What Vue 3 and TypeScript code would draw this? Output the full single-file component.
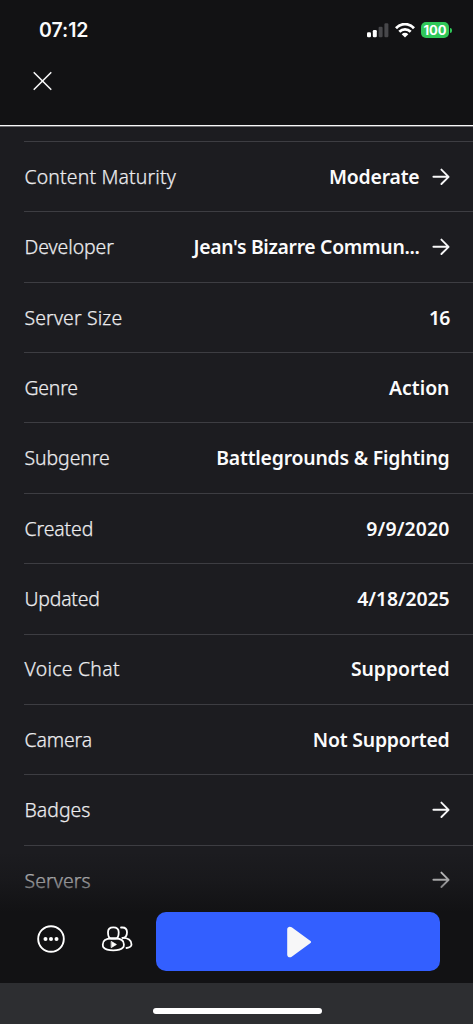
<script setup lang="ts">
interface Row {
  label: string
  labelSpacing: number
  value?: string
  valueSpacing?: number
  link?: boolean
}

const rows: Row[] = [
  { label: 'Content Maturity', labelSpacing: 0.17, value: 'Moderate', valueSpacing: -0.2, link: true },
  { label: 'Developer', labelSpacing: -0.05, value: "Jean's Bizarre Commun...", valueSpacing: -0.33, link: true },
  { label: 'Server Size', labelSpacing: 0.15, value: '16', valueSpacing: -0.9 },
  { label: 'Genre', labelSpacing: -0.2, value: 'Action', valueSpacing: 0 },
  { label: 'Subgenre', labelSpacing: -0.05, value: 'Battlegrounds & Fighting', valueSpacing: -0.2 },
  { label: 'Created', labelSpacing: -0.1, value: '9/9/2020', valueSpacing: 0.15 },
  { label: 'Updated', labelSpacing: -0.2, value: '4/18/2025', valueSpacing: -0.1 },
  { label: 'Voice Chat', labelSpacing: 0.28, value: 'Supported', valueSpacing: -0.05 },
  { label: 'Camera', labelSpacing: -0.1, value: 'Not Supported', valueSpacing: -0.2 },
  { label: 'Badges', labelSpacing: 0.05, link: true },
  { label: 'Servers', labelSpacing: 0.1, link: true },
]
</script>

<template>
  <div class="screen">
    <header class="top">
      <div class="status">
        <span class="time">07:12</span>
        <div class="indicators">
          <svg class="signal" width="22" height="15" viewBox="0 0 22 15">
            <rect x="0" y="9.3" width="4" height="4.9" rx="1.2" fill="#fff" />
            <rect x="5.8" y="7" width="4" height="7.2" rx="1.2" fill="#fff" />
            <rect x="11.6" y="3.7" width="4" height="10.5" rx="1.2" fill="#47474a" />
            <rect x="17.4" y="0.2" width="4" height="14" rx="1.2" fill="#47474a" />
          </svg>
          <svg class="wifi" width="20" height="15" viewBox="0 0 20 15" fill="none" stroke="#fff" stroke-width="2.8">
            <path d="M1 5.2C6-.2 14-.2 19 5.2" />
            <path d="M4.3 8.7c3.3-3.2 8.1-3.2 11.4 0" />
            <path d="M6.7 11.2c1.9-1.8 4.7-1.8 6.6 0L10 14.6z" fill="#fff" stroke="none" />
          </svg>
          <div class="battery"><span class="level">100</span></div>
          <i class="nub"></i>
        </div>
      </div>
      <svg class="close" width="20" height="20" viewBox="0 0 20 20" fill="none" stroke="#f7f7f8" stroke-width="1.6" stroke-linecap="round">
        <path d="M1.2 1.7l16.6 16.6M17.800 1.700L1.200 18.300" />
      </svg>
    </header>
    <main class="list">
      <div v-for="row in rows" :key="row.label" class="row">
        <span class="label" :style="{ letterSpacing: `${row.labelSpacing}px` }">{{ row.label }}</span>
        <span v-if="row.value" class="value" :style="{ letterSpacing: `${row.valueSpacing}px` }">{{ row.value }}</span>
        <svg v-if="row.link" class="arrow" width="18" height="18" viewBox="0 0 18 18" fill="none" stroke="#f7f7f8" stroke-width="1.9" stroke-linecap="round" stroke-linejoin="round">
          <path d="M1.4 8.800h14.800M9.400 1.600L16.600 8.800l-7.200 7.200" />
        </svg>
      </div>
    </main>
    <footer class="bottom">
      <div class="actions">
        <svg class="more" width="28" height="28" viewBox="0 0 28 28">
          <circle cx="14" cy="14" r="12.8" fill="none" stroke="#fff" stroke-width="1.9" />
          <circle cx="8.5" cy="14" r="2" fill="#fff" />
          <circle cx="14" cy="14" r="2" fill="#fff" />
          <circle cx="19.5" cy="14" r="2" fill="#fff" />
        </svg>
        <svg class="friends" width="32" height="28" viewBox="0 0 32 28" fill="none" stroke="#fff" stroke-width="1.8" stroke-linecap="round" stroke-linejoin="round">
          <path d="M7 7.2C7 4 8.4 2.4 12.3 2.4S17.7 4 17.7 7.2c0 3.8-1.2 6.3-3.2 6.3h-4.2C8.3 13.5 7 11 7 7.2z" />
          <path d="M10.3 13.5C4.7 13.5 1.8 15.7 1.8 19.5c0 1.4.1 2.3.7 2.9 1.6 1.8 5.2 3 9.8 3s8.200-1.200 9.800-3c.6-.6.8-1.500.8-2.900 0-3.800-2.900-6-8.400-6z" />
          <path d="M20 2.5h1.3c3 0 4.700 1.500 4.700 4.700 0 3.600-1.200 5.600-4.500 5.600" />
          <path d="M21.5 12.8c5.600 0 9 2.500 9 6.600 0 2-1.700 3-5 3.600" />
          <path d="M10.500 16.600l4.900 2.900-4.900 2.900z" fill="#fff" stroke-width=".8" />
        </svg>
        <button class="play" aria-label="Play">
          <svg width="26" height="32" viewBox="0 0 26 32">
            <path d="M1.2 3.3C1.2 1 3.8-.1 5.7 1.3L24.5 15q1.200 1 0 2L5.700 30.800C3.800 32.100 1.200 31 1.200 28.700z" fill="#f7f7f8" />
          </svg>
        </button>
      </div>
      <div class="home"><i class="bar"></i></div>
    </footer>
  </div>
</template>

<style scoped>
.screen {
  width: 473px;
  height: 1024px;
  position: relative;
  overflow: hidden;
  display: flex;
  flex-direction: column;
  background: #1c1c20;
  color: #fbfbfc;
  font-family: "Noto Sans", sans-serif;
}
.top {
  flex: none;
  box-sizing: border-box;
  height: 127px;
  background: #121214;
  border-bottom: 1px solid #6c6c70;
  box-shadow: inset 0 -1px #f7f7f8;
}
.status {
  height: 60px;
  padding: 0 21px 0 39px;
  display: flex;
  align-items: center;
  justify-content: space-between;
}
.time {
  font: 600 19.5px/24px Inter, sans-serif;
  letter-spacing: -0.05px;
}
.indicators {
  display: flex;
  align-items: center;
}
.wifi { margin: 0 6px 0 6px; }
.battery {
  width: 28px;
  height: 16px;
  border-radius: 5px;
  background: #30c759;
  display: flex;
  align-items: center;
  justify-content: center;
}
.level {
  font: 700 13px/16px Inter, sans-serif;
  color: #fff;
}
.nub {
  width: 2px;
  height: 5px;
  margin-left: 1px;
  border-radius: 0 3px 3px 0;
  background: #30c759;
}
.close {
  display: block;
  margin: 11px 0 0 33px;
}
.list {
  flex: none;
  margin: 14px 0 0 24px;
}
.row {
  box-sizing: border-box;
  height: 70.36px;
  padding-right: 23.5px;
  border-top: 1px solid #3d3d42;
  display: flex;
  align-items: center;
  white-space: nowrap;
}
.label {
  flex: 1;
  padding: 0 0 0.5px 0.5px;
  font-size: 19.4px;
  font-weight: 300;
  -webkit-text-stroke: 0.25px #ececef;
  color: #ececef;
}
.value {
  padding-bottom: 0.5px;
  font-size: 19.4px;
  font-weight: 600;
}
.arrow { margin-left: 12px; }
.bottom {
  position: absolute;
  inset: auto 0 0;
  padding-top: 56px;
  background: linear-gradient(rgba(18, 18, 20, 0), rgba(18, 18, 20, 0.36) 28px, #121214 60px);
}
.actions {
  height: 75px;
  display: flex;
  align-items: flex-start;
}
.more { margin: 17px 0 0 37px; }
.friends { margin: 17px 0 0 36px; }
.play {
  width: 284.5px;
  height: 58.5px;
  margin: 4px 0 0 22.5px;
  padding: 2px 0 0 2px;
  border: 0;
  border-radius: 10px;
  background: #335fff;
  display: flex;
  align-items: center;
  justify-content: center;
}
.home {
  height: 41px;
  background: #2d2e31;
  display: flex;
  justify-content: center;
}
.bar {
  width: 169px;
  height: 6px;
  margin: 25px 0 0 1px;
  border-radius: 3px;
  background: #fff;
}
</style>
<style>
body { background: #1c1c20; }
</style>
